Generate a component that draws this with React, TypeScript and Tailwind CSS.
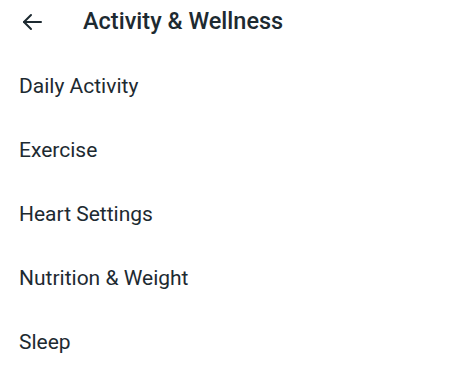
const items = ["Daily Activity", "Exercise", "Heart Settings", "Nutrition & Weight", "Sleep"];

function BackArrow() {
  return (
    <svg width="20" height="18" viewBox="0 0 20 18" fill="none" stroke="currentColor" strokeWidth="2" strokeLinecap="round" strokeLinejoin="round">
      <path d="M19 9H2" />
      <path d="M9 2L2 9l7 7" />
    </svg>
  );
}

export default function App() {
  return (
    <div
      className="w-[474px] h-[379px] bg-white text-[#1d2a31] overflow-hidden pt-[2px]"
      style={{ fontFamily: "Roboto, 'Noto Sans', sans-serif" }}
    >
      <header className="h-10 flex items-center">
        <button className="w-[64px] h-10 flex items-center pl-[22px]">
          <BackArrow />
        </button>
        <h1 className="ml-[19px] text-[23.5px] font-medium">Activity &amp; Wellness</h1>
      </header>
      <ul className="mt-[13px]">
        {items.map((item) => (
          <li key={item} className="h-16 flex items-center px-[19px] text-[21px]">
            {item}
          </li>
        ))}
      </ul>
    </div>
  );
}
